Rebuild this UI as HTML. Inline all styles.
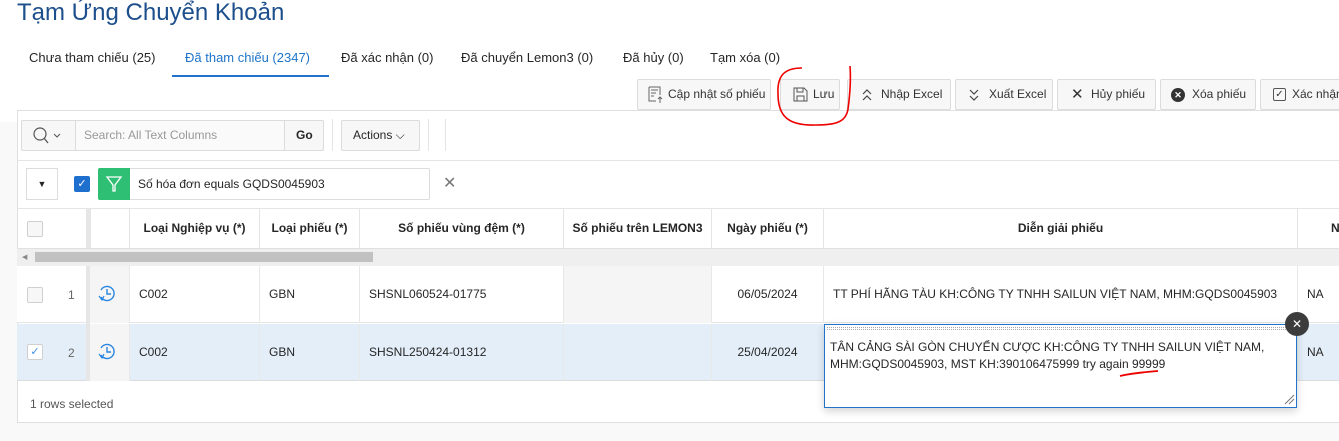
<!DOCTYPE html><html><head><meta charset="utf-8"><style>
*{box-sizing:border-box;margin:0;padding:0}
body{width:1339px;height:441px;overflow:hidden;background:#f9f9f9;font-family:"Liberation Sans",sans-serif;font-size:12px;color:#262626;position:relative}
.a{position:absolute}
.btn{position:absolute;top:79px;height:31px;border:1px solid #dcdcdc;border-radius:2px;background:#f7f7f7;font-size:12px;color:#333;line-height:29px;padding-left:10px;white-space:nowrap}
.th{position:absolute;top:209px;height:39px;line-height:39px;text-align:center;font-weight:bold;font-size:12px;border-left:1px solid #e5e5e5;color:#262626}
.cell{position:absolute;line-height:57px;font-size:12px;border-left:1px solid #e8e8e8;padding-left:9px;white-space:nowrap}
.cb{position:absolute;width:16px;height:16px;border:1px solid #cfcfcf;border-radius:2px;background:#f7f7f7}
</style></head><body>
<div class="a" style="left:0;top:0;width:1339px;height:122px;background:#fff"></div>
<div class="a" style="left:17px;top:-1px;font-size:24px;color:#1d4f8c">Tạm Ứng Chuyển Khoản</div>
<div class="a" style="left:29px;top:50px;font-size:13px;color:#262626">Chưa tham chiếu (25)</div>
<div class="a" style="left:185px;top:50px;font-size:13px;color:#1f74c9">Đã tham chiếu (2347)</div>
<div class="a" style="left:172px;top:75px;width:157px;height:2px;background:#1f74c9"></div>
<div class="a" style="left:341px;top:50px;font-size:13px">Đã xác nhận (0)</div>
<div class="a" style="left:461px;top:50px;font-size:13px">Đã chuyển Lemon3 (0)</div>
<div class="a" style="left:623px;top:50px;font-size:13px">Đã hủy (0)</div>
<div class="a" style="left:710px;top:50px;font-size:13px">Tạm xóa (0)</div>

<div class="btn" style="left:637px;width:134px;padding-left:30px"><svg class="a" style="left:10px;top:6px" width="16" height="18"><path d="M1 1 H12 V9 M1 1 V15 H8 M3 4 H10 M3 7 H8 M3 10 H6 M12 17 V11 M10 13 L12 11 L14 13" fill="none" stroke="#666"/></svg>Cập nhật số phiếu</div>
<div class="btn" style="left:780px;width:60px;padding-left:32px"><svg class="a" style="left:12px;top:7px" width="15" height="15"><path d="M1 1 H11 L14 4 V14 H1 Z M4 1 V5 H10 V1 M4 14 V9 H11 V14" fill="none" stroke="#555"/></svg>Lưu</div>
<div class="btn" style="left:847px;width:104px;padding-left:33px"><svg class="a" style="left:14px;top:9px" width="10" height="12"><path d="M1 5 L5 1 L9 5 M1 11 L5 7 L9 11" fill="none" stroke="#444" stroke-width="1.2"/></svg>Nhập Excel</div>
<div class="btn" style="left:955px;width:98px;padding-left:33px"><svg class="a" style="left:13px;top:9px" width="10" height="12"><path d="M1 1 L5 5 L9 1 M1 7 L5 11 L9 7" fill="none" stroke="#444" stroke-width="1.2"/></svg>Xuất Excel</div>
<div class="btn" style="left:1057px;width:99px;padding-left:33px"><span class="a" style="left:13px;top:0;font-size:15px">✕</span>Hủy phiếu</div>
<div class="btn" style="left:1160px;width:96px;padding-left:31px"><span class="a" style="left:10px;top:8px;width:14px;height:14px;border-radius:7px;background:#333;color:#fff;font-size:9px;line-height:14px;text-align:center;font-weight:bold">✕</span>Xóa phiếu</div>
<div class="btn" style="left:1260px;width:90px;padding-left:31px"><span class="a" style="left:12px;top:8px;width:13px;height:13px;border:1px solid #555;border-radius:2px;font-size:10px;line-height:11px;text-align:center">✓</span>Xác nhận</div>

<div class="a" style="left:17px;top:110px;width:1330px;height:313px;border:1px solid #dfdfdf;background:#fff"></div>
<div class="a" style="left:21px;top:120px;width:303px;height:31px;border:1px solid #dcdcdc;background:#f7f7f7;border-radius:2px"></div>
<svg class="a" style="left:32px;top:126px" width="40" height="20"><circle cx="8" cy="8" r="6" fill="none" stroke="#555" stroke-width="1.2"/><path d="M12 12 L16 17" stroke="#555" stroke-width="1.3"/><path d="M22 8 L25 11 L28 8" fill="none" stroke="#555"/></svg>
<div class="a" style="left:75px;top:121px;width:210px;height:29px;background:#fafafa;border-left:1px solid #dcdcdc;border-right:1px solid #dcdcdc;color:#999;padding-left:8px;line-height:29px">Search: All Text Columns</div>
<div class="a" style="left:296px;top:128px;font-weight:bold;font-size:12px">Go</div>
<div class="a" style="left:332px;top:119px;width:1px;height:32px;background:#e5e5e5"></div>
<div class="a" style="left:341px;top:120px;width:79px;height:31px;border:1px solid #dcdcdc;background:#f7f7f7;border-radius:2px;line-height:29px;padding-left:11px">Actions ⌵</div>
<div class="a" style="left:428px;top:119px;width:1px;height:32px;background:#e5e5e5"></div>
<div class="a" style="left:445px;top:119px;width:1px;height:32px;background:#e5e5e5"></div>
<div class="a" style="left:17px;top:160px;width:1330px;height:1px;background:#e5e5e5"></div>

<div class="a" style="left:26px;top:168px;width:32px;height:32px;border:1px solid #dcdcdc;background:#fff;text-align:center;line-height:30px;font-size:9px">▼</div>
<div class="a" style="left:74px;top:176px;width:16px;height:16px;background:#1f6fcf;border-radius:2px;color:#fff;font-size:11px;text-align:center;line-height:16px">✓</div>
<div class="a" style="left:98px;top:168px;width:332px;height:32px;border:1px solid #dcdcdc;background:#fff;border-radius:2px;padding-left:39px;line-height:30px">Số hóa đơn equals GQDS0045903</div>
<div class="a" style="left:98px;top:168px;width:32px;height:32px;background:#2ebf75;border-radius:2px 0 0 2px"></div>
<svg class="a" style="left:105px;top:175px" width="18" height="18"><path d="M2 2 H16 L10 10 V16 L8 16 V10 Z" fill="none" stroke="#fff" stroke-width="1.3"/></svg>
<div class="a" style="left:443px;top:173px;font-size:16px;color:#777">✕</div>
<div class="a" style="left:17px;top:208px;width:1330px;height:1px;background:#e5e5e5"></div>

<div class="th" style="left:17px;width:69px;border-left:0"></div>
<div class="cb" style="left:27px;top:221px"></div>
<div class="a" style="left:86px;top:209px;width:4px;height:172px;background:#e6e6e6"></div>
<div class="th" style="left:90px;width:39px"></div>
<div class="th" style="left:129px;width:130px">Loại Nghiệp vụ (*)</div>
<div class="th" style="left:259px;width:100px">Loại phiếu (*)</div>
<div class="th" style="left:359px;width:204px">Số phiếu vùng đệm (*)</div>
<div class="th" style="left:563px;width:148px">Số phiếu trên LEMON3</div>
<div class="th" style="left:711px;width:112px">Ngày phiếu (*)</div>
<div class="th" style="left:823px;width:474px">Diễn giải phiếu</div>
<div class="th" style="left:1297px;width:60px;text-align:left;padding-left:33px">N</div>
<div class="a" style="left:17px;top:248px;width:1330px;height:18px;background:#efefef;border-top:1px solid #e0e0e0"></div>
<div class="a" style="left:22px;top:253px;font-size:7px;color:#888">◀</div>
<div class="a" style="left:35px;top:252px;width:338px;height:10px;background:#c1c1c1"></div>

<div class="a" style="left:17px;top:266px;width:1330px;height:57px;background:#fff;border-bottom:1px solid #e5e5e5"></div>
<div class="a" style="left:86px;top:266px;width:4px;height:115px;background:#e6e6e6"></div>
<div class="a" style="left:90px;top:266px;width:39px;height:57px;background:#f5f5f5"></div>
<div class="a" style="left:563px;top:266px;width:148px;height:57px;background:#f5f5f5"></div>
<div class="cb" style="left:27px;top:287px"></div>
<div class="a" style="left:68px;top:288px;color:#666">1</div>
<div class="cell" style="left:129px;top:266px">C002</div>
<div class="cell" style="left:259px;top:266px">GBN</div>
<div class="cell" style="left:359px;top:266px">SHSNL060524-01775</div>
<div class="cell" style="left:563px;top:266px;height:57px"></div>
<div class="cell" style="left:711px;top:266px;width:112px;text-align:center;padding:0">06/05/2024</div>
<div class="cell" style="left:823px;top:266px">TT PHÍ HÃNG TÀU KH:CÔNG TY TNHH SAILUN VIỆT NAM, MHM:GQDS0045903</div>
<div class="cell" style="left:1297px;top:266px">NA</div>

<div class="a" style="left:17px;top:324px;width:1330px;height:57px;background:#e4eef8;border-bottom:1px solid #dcdcdc"></div>
<div class="a" style="left:90px;top:324px;width:39px;height:57px;background:#f5f5f5"></div>
<div class="a" style="left:86px;top:324px;width:4px;height:57px;background:#e6e6e6"></div>
<div class="cb" style="left:27px;top:344px;background:#fff;color:#3a8ee6;font-size:11px;line-height:14px;text-align:center">✓</div>
<div class="a" style="left:68px;top:346px;color:#666">2</div>
<div class="cell" style="left:129px;top:324px">C002</div>
<div class="cell" style="left:259px;top:324px">GBN</div>
<div class="cell" style="left:359px;top:324px">SHSNL250424-01312</div>
<div class="cell" style="left:563px;top:324px;height:57px"></div>
<div class="cell" style="left:711px;top:324px;width:112px;text-align:center;padding:0">25/04/2024</div>
<div class="cell" style="left:1297px;top:324px">NA</div>

<svg class="a" style="left:97px;top:284px" width="20" height="20"><path d="M4 13 A7 7 0 1 0 4 6" fill="none" stroke="#2a86e0" stroke-width="1.4"/><path d="M10 5 V10 H14" fill="none" stroke="#2a86e0" stroke-width="1.4"/><path d="M2 12 L5 16 L7 12" fill="none" stroke="#2a86e0" stroke-width="1.2"/></svg>
<svg class="a" style="left:97px;top:342px" width="20" height="20"><path d="M4 13 A7 7 0 1 0 4 6" fill="none" stroke="#2a86e0" stroke-width="1.4"/><path d="M10 5 V10 H14" fill="none" stroke="#2a86e0" stroke-width="1.4"/><path d="M2 12 L5 16 L7 12" fill="none" stroke="#2a86e0" stroke-width="1.2"/></svg>

<div class="a" style="left:30px;top:397px;color:#555">1 rows selected</div>

<div class="a" style="left:824px;top:324px;width:473px;height:84px;border:1px solid #1f74c9;background:#fff;box-shadow:0 3px 8px rgba(0,0,0,.18)"></div>
<div class="a" style="left:827px;top:327px;width:467px;height:3px;border-top:1px dotted #aaa;border-bottom:1px dotted #aaa"></div>
<div class="a" style="left:830px;top:339px;width:460px;line-height:17px;font-size:12px">TÂN CẢNG SÀI GÒN CHUYỂN CƯỢC KH:CÔNG TY TNHH SAILUN VIỆT NAM, MHM:GQDS0045903, MST KH:390106475999 try again 99999</div>
<svg class="a" style="left:1283px;top:393px" width="12" height="12"><path d="M2 11 L11 2 M6 11 L11 6" stroke="#777"/></svg>
<div class="a" style="left:1285px;top:312px;width:24px;height:24px;border-radius:12px;background:#3c3c3c;color:#fff;text-align:center;line-height:24px;font-size:12px">✕</div>
<svg class="a" style="left:1117px;top:369px" width="44" height="10"><path d="M3 7 C15 4 30 3 41 2" fill="none" stroke="#e00" stroke-width="1.8"/></svg>
<svg class="a" style="left:774px;top:64px" width="82" height="66"><path d="M28 4 C10 4 3 12 4 30 C4 52 14 62 42 61 C62 61 72 58 74 45 C76 30 77 15 76 2" fill="none" stroke="#e00" stroke-width="1.6"/></svg>
</body></html>
